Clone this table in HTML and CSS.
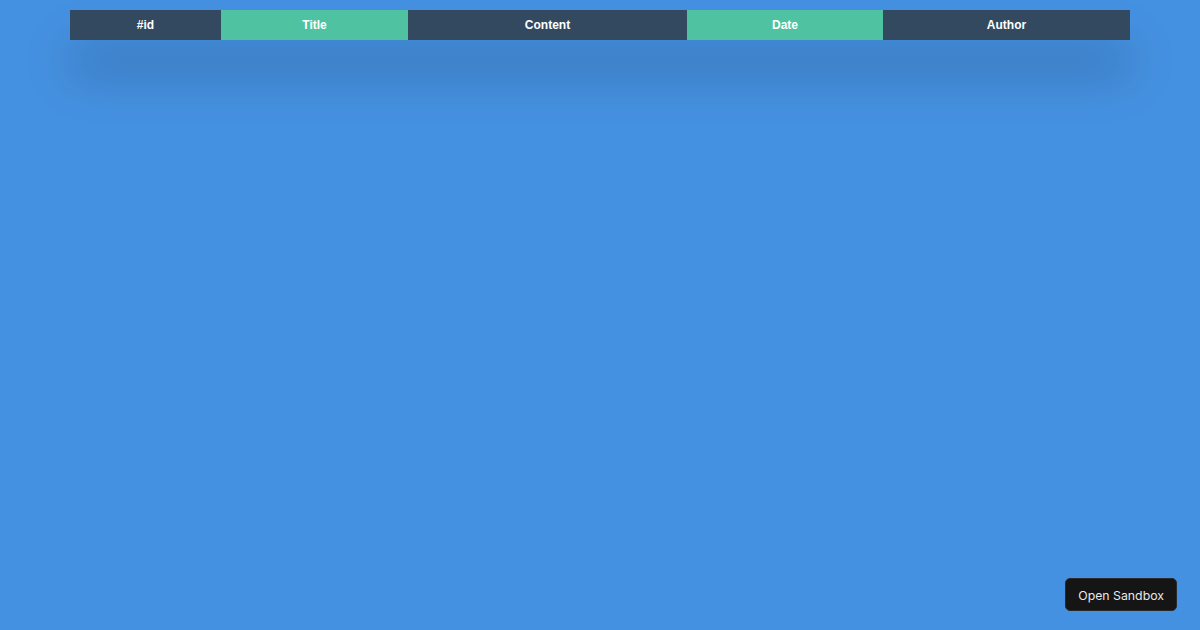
FILE: index.html
```html
<!DOCTYPE html>
<html>
<head>
<meta charset="utf-8">
<link rel="stylesheet" href="styles.css">
</head>
<body>
<div class="wrap">
  <table class="tbl">
    <thead>
      <tr>
        <th class="c-id">#id</th>
        <th class="c-title green">Title</th>
        <th class="c-content">Content</th>
        <th class="c-date green">Date</th>
        <th class="c-author">Author</th>
      </tr>
    </thead>
    <tbody></tbody>
  </table>
</div>
<a class="sandbox">Open Sandbox</a>
</body>
</html>
```
FILE: styles.css
```css
html, body {
  margin: 0;
  padding: 0;
  background: #4591e1;
  height: 100%;
  font-family: "Liberation Sans", Arial, sans-serif;
}
.wrap {
  margin: 10px 70px 70px;
  box-shadow: 0 35px 50px rgba(0, 0, 0, 0.2);
}
.tbl {
  width: 100%;
  border-collapse: collapse;
  table-layout: fixed;
}
.tbl th {
  height: 30px;
  padding: 0;
  background: #324960;
  color: #fff;
  font-size: 12px;
  font-weight: bold;
  text-align: center;
}
.tbl th.green { background: #4fc3a1; }
.c-id { width: 151px; }
.c-title { width: 187px; }
.c-content { width: 279px; }
.c-date { width: 196px; }
.sandbox {
  position: fixed;
  right: 23px;
  bottom: 19px;
  background: #151515;
  color: #e8e8e8;
  font-family: Inter, "Liberation Sans", sans-serif;
  font-size: 12.3px;
  border-radius: 5px;
  padding: 0 12px;
  height: 33px;
  line-height: 33px;
  border: 1px solid #2a2a2a;
  box-sizing: border-box;
}
```
